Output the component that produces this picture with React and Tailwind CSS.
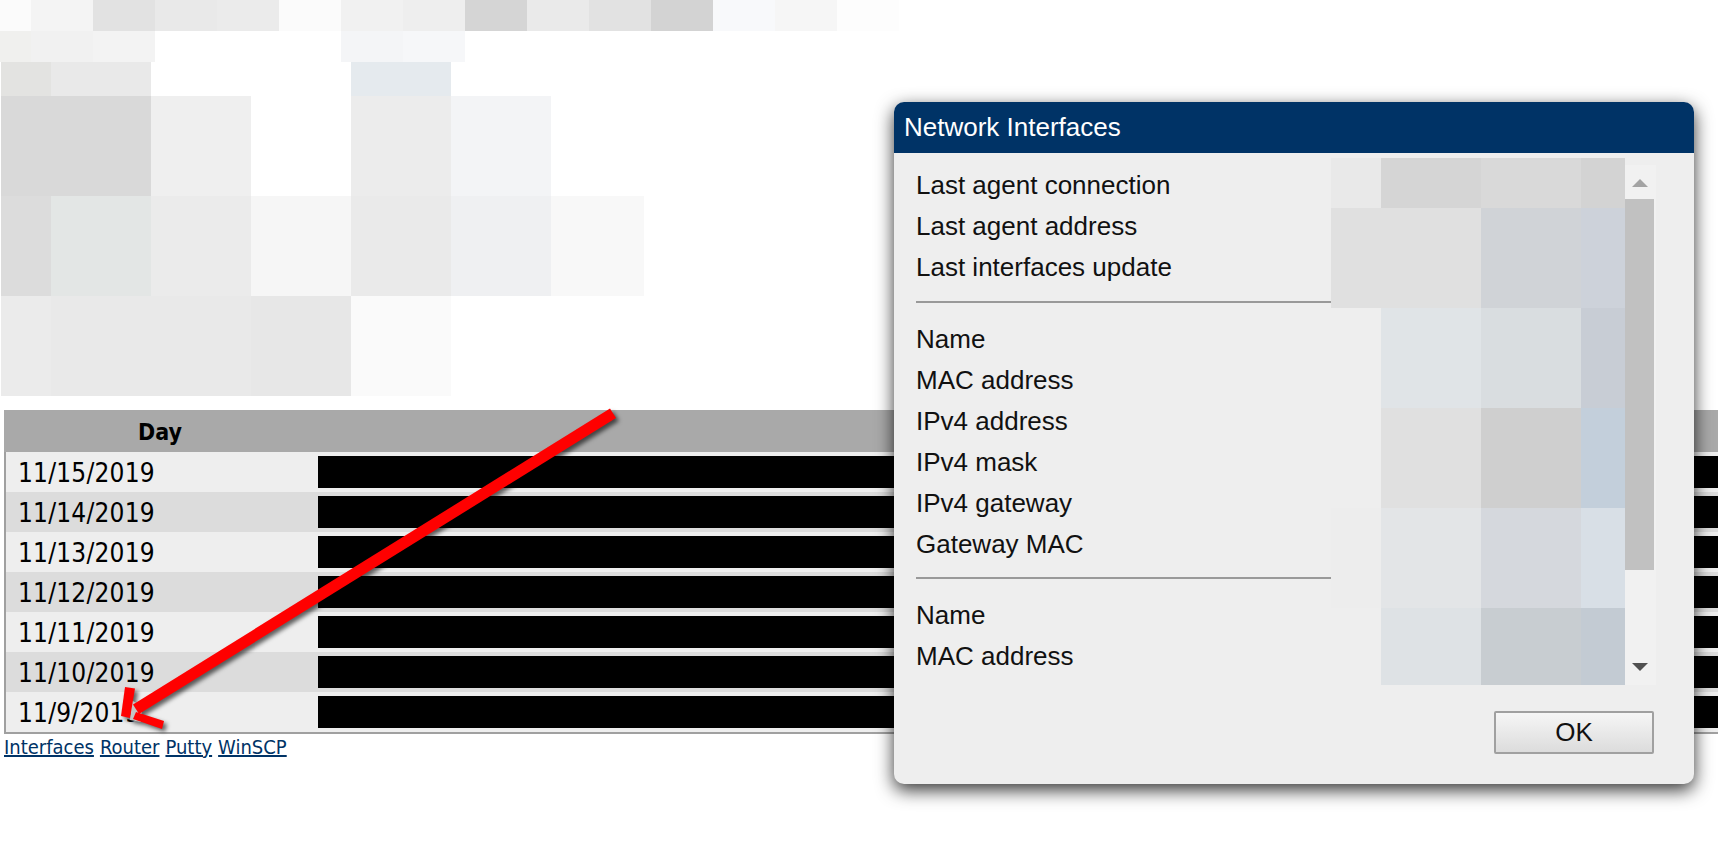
import React from "react";

// censored area at the top of the page, row by row
const topMosaic = [
  { h: "h-[31px]", cells: ["w-[31px] bg-[#fbfbfb]", "w-[62px] bg-[#f4f4f4]", "w-[62px] bg-[#e2e2e2]", "w-[62px] bg-[#e9e9e9]", "w-[62px] bg-[#ebebeb]", "w-[62px] bg-[#fbfbfb]", "w-[62px] bg-[#f1f1f1]", "w-[62px] bg-[#eeeeee]", "w-[62px] bg-[#d5d5d5]", "w-[62px] bg-[#eaeaea]", "w-[62px] bg-[#e2e2e2]", "w-[62px] bg-[#d3d3d3]", "w-[62px] bg-[#f8f9fb]", "w-[62px] bg-[#f6f6f6]", "w-[62px] bg-[#fdfdfd]"] },
  { h: "h-[31px]", cells: ["w-[31px] bg-[#f0f0ee]", "w-[62px] bg-[#f1f1f1]", "w-[62px] bg-[#f3f3f3]", "w-[186px]", "w-[62px] bg-[#f4f5f7]", "w-[62px] bg-[#f6f7f9]"] },
  { h: "h-[34px]", cells: ["w-px", "w-[50px] bg-[#e3e3e1]", "w-[100px] bg-[#e9e9e9]", "w-[200px]", "w-[100px] bg-[#e5eaee]"] },
  { h: "h-[100px]", cells: ["w-px", "w-[150px] bg-[#d9d9d9]", "w-[100px] bg-[#efefef]", "w-[100px]", "w-[100px] bg-[#ececec]", "w-[100px] bg-[#f3f4f6]"] },
  { h: "h-[100px]", cells: ["w-px", "w-[50px] bg-[#dcdcdc]", "w-[100px] bg-[#e3e6e5]", "w-[100px] bg-[#ebebeb]", "w-[100px] bg-[#f6f6f6]", "w-[100px] bg-[#eaeaea]", "w-[100px] bg-[#eff0f2]", "w-[93px] bg-[#f8f8f8]"] },
  { h: "h-[100px]", cells: ["w-px", "w-[50px] bg-[#ebebeb]", "w-[200px] bg-[#e9e9e9]", "w-[100px] bg-[#e7e7e7]", "w-[100px] bg-[#fafafa]"] },
];

// censored values inside the dialog
const dialogMosaic = [
  { h: "h-[50px]", cells: ["w-[50px] bg-[#e9e9e9]", "w-[100px] bg-[#d5d5d5]", "w-[100px] bg-[#d9d9d9]", "w-[44px] bg-[#d3d3d3]"] },
  { h: "h-[100px]", cells: ["w-[150px] bg-[#e0e0e0]", "w-[100px] bg-[#d0d3d7]", "w-[44px] bg-[#cdd2da]"] },
  { h: "h-[100px]", cells: ["w-[50px]", "w-[100px] bg-[#e0e4e7]", "w-[100px] bg-[#d9dde0]", "w-[44px] bg-[#c8cdd5]"] },
  { h: "h-[100px]", cells: ["w-[50px]", "w-[100px] bg-[#e0e0e0]", "w-[100px] bg-[#cfcfcf]", "w-[44px] bg-[#c3cfdb]"] },
  { h: "h-[100px]", cells: ["w-[50px] bg-[#ededed]", "w-[100px] bg-[#e3e5e7]", "w-[100px] bg-[#d5d8dd]", "w-[44px] bg-[#d8dfe6]"] },
  { h: "h-[77px]", cells: ["w-[50px]", "w-[100px] bg-[#dee2e5]", "w-[100px] bg-[#c8cdd1]", "w-[44px] bg-[#c3cbd3]"] },
];

const days = ["11/15/2019", "11/14/2019", "11/13/2019", "11/12/2019", "11/11/2019", "11/10/2019", "11/9/2019"];
const links = ["Interfaces", "Router", "Putty", "WinSCP"];

function Mosaic({ rows }) {
  return (
    <div>
      {rows.map((row, i) => (
        <div key={i} className={`flex ${row.h}`}>
          {row.cells.map((cell, j) => (
            <div key={j} className={`shrink-0 ${cell}`} />
          ))}
        </div>
      ))}
    </div>
  );
}

function Label({ children }) {
  return <div className="h-[41px] leading-[41px]">{children}</div>;
}

function NetworkDialog() {
  return (
    <div className="absolute left-[894px] top-[102px] flex h-[682px] w-[800px] flex-col overflow-hidden rounded-[10px] bg-[#eeeeee] font-['Liberation_Sans',Arial,sans-serif] shadow-[0_6px_18px_rgba(0,0,0,0.8)]">
      <div className="h-[51px] bg-[#003366] pl-[10px] text-[26px] leading-[50px] text-white">Network Interfaces</div>

      <div className="relative flex h-[532px] pl-[22px] pr-[38px] text-[26px] text-[#111111]">
        <div className="flex-1 pt-3">
          <Label>Last agent connection</Label>
          <Label>Last agent address</Label>
          <Label>Last interfaces update</Label>
          <div className="mb-4 mt-[13px] h-[2px] bg-[#999999]" />
          <Label>Name</Label>
          <Label>MAC address</Label>
          <Label>IPv4 address</Label>
          <Label>IPv4 mask</Label>
          <Label>IPv4 gateway</Label>
          <Label>Gateway MAC</Label>
          <div className="mb-4 mt-3 h-[2px] bg-[#999999]" />
          <Label>Name</Label>
          <Label>MAC address</Label>
        </div>

        <div className="mt-3 flex w-[31px] flex-col bg-[#f1f1f1]">
          <div className="flex h-[34px] items-start justify-center pr-[1px] pt-[14px]">
            <svg width="16" height="8" viewBox="0 0 16 8"><path d="M8 0 16 8H0Z" fill="#a3a3a3" /></svg>
          </div>
          <div className="h-[371px] w-[29px] bg-[#c1c1c1]" />
          <div className="flex flex-1 items-end justify-center pb-[14px] pr-[1px]">
            <svg width="16" height="8" viewBox="0 0 16 8"><path d="M0 0H16L8 8Z" fill="#505050" /></svg>
          </div>
        </div>

        <div className="absolute left-[437px] top-[5px]">
          <Mosaic rows={dialogMosaic} />
        </div>
      </div>

      <div className="flex justify-end pr-10 pt-[26px]">
        <button className="h-[43px] w-[160px] rounded-[2px] border-2 border-[#a0a0a0] bg-gradient-to-b from-[#f6f6f6] to-[#dcdcdc] pb-[2px] text-[26px] leading-none text-[#111111]">
          OK
        </button>
      </div>
    </div>
  );
}

function RedArrow() {
  return (
    <svg className="pointer-events-none absolute left-0 top-0 drop-shadow-[3px_3px_2px_rgba(0,0,0,0.6)]" width="1718" height="852" viewBox="0 0 1718 852">
      <path d="M131 700 142 706 141 722 130 720Z" fill="#c4c4c4" />
      <path d="M610 408.5 616 418 139 714 133 704.5Z" fill="#ff0000" />
      <path d="M125 687 135 688.5 130 718 121 716Z" fill="#ff0000" />
      <path d="M136 712 164 721 162 729 133 719Z" fill="#ff0000" />
    </svg>
  );
}

export default function App() {
  return (
    <div className="relative h-[852px] w-[1718px] overflow-hidden bg-white font-['DejaVu_Sans_Condensed','DejaVu_Sans',sans-serif] [font-stretch:condensed]">
      <Mosaic rows={topMosaic} />

      <div className="ml-1 mt-[14px]">
        <div className="flex h-[42px] bg-[#a9a9a9] text-[23px] font-bold leading-[44px] text-black">
          <div className="w-[312px] text-center">Day</div>
        </div>
        <div className="border-b-2 border-l-2 border-[#a0a0a0]">
          {days.map((day, i) => (
            <div key={day} className={`flex h-10 ${i % 2 === 0 ? "bg-[#eeeeee]" : "bg-[#dcdcdc]"}`}>
              <div className="w-[308px] pl-3 text-[26px] leading-[42px] tracking-[0.2px] text-black">{day}</div>
              <div className="my-1 ml-1 flex-1 bg-black" />
            </div>
          ))}
        </div>
        <div className="flex gap-[6px] text-[20px] leading-[26px]">
          {links.map((link) => (
            <a key={link} href="#" className="text-[#003366] underline decoration-[1.5px]">{link}</a>
          ))}
        </div>
      </div>

      <RedArrow />
      <NetworkDialog />
    </div>
  );
}
